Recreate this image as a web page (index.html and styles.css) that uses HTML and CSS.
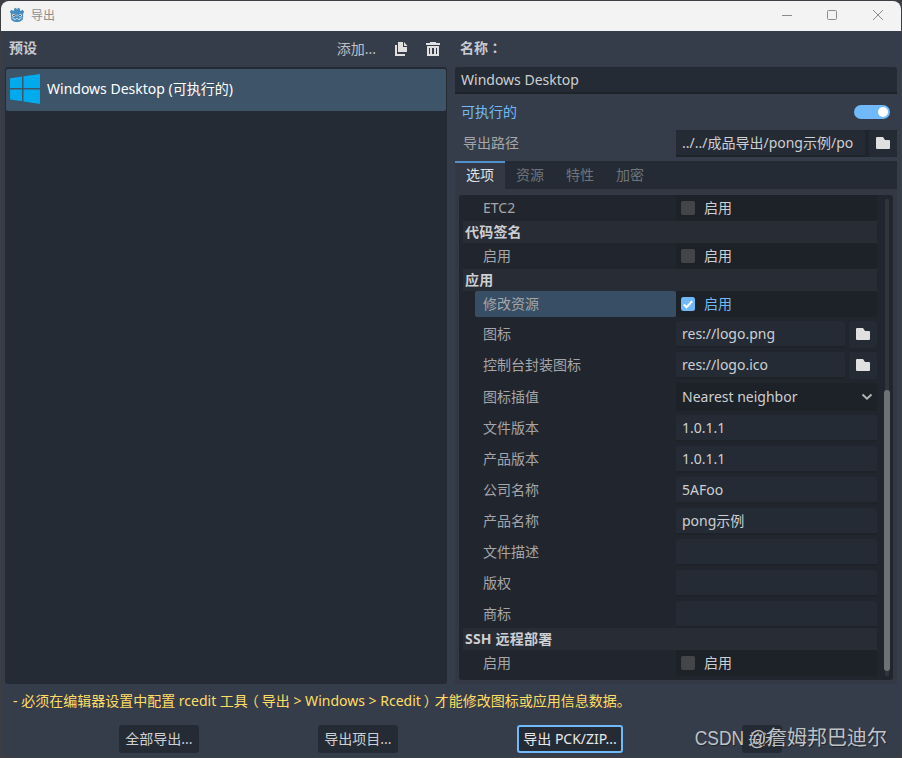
FILE: index.html
```html
<!DOCTYPE html>
<html lang="zh-CN">
<head>
<meta charset="utf-8">
<title>导出</title>
<link rel="stylesheet" href="styles.css">
</head>
<body>
<svg class="defs" width="0" height="0">
  <symbol id="folder" viewBox="0 0 14 12"><path d="M1 0h6l2 3h4q1 0 1 1v7q0 1-1 1H1q-1 0-1-1V1q0-1 1-1z" fill="#e0e0e0"/></symbol>
</svg>
<div class="window">
  <header class="titlebar">
    <svg class="logo" width="16" height="16" viewBox="0 0 16 16">
      <path d="M.8 5l1.500-2.200 1.700 1 1-.4.2-2 2-.6.4 1.500h.8l.4-1.500 2 .6.2 2 1 .4 1.700-1L15.200 5l-1.100 1.500V11c0 2.500-3 4-6.100 4s-6.100-1.500-6.100-4V6.500z" fill="#478cbf"/>
      <circle cx="4.800" cy="8.200" r="1.500" fill="#fff"/><circle cx="11.200" cy="8.200" r="1.500" fill="#fff"/>
      <circle cx="5" cy="8.300" r=".9" fill="#414042"/><circle cx="11" cy="8.300" r=".9" fill="#414042"/>
      <path d="M8 7.500v2M2.400 10.800l2.400.3.2 1.300h2l.3-1h1.400l.3 1h2l.2-1.300 2.400-.3" fill="none" stroke="#fff" stroke-width=".6"/>
    </svg>
    <span class="caption">导出</span>
    <svg class="controls" width="102" height="12" viewBox="0 0 102 12" fill="none" stroke="#8b8b8b">
      <path d="M0 6.500h10"/><rect x="45.500" y="1.500" width="9" height="9" rx="1"/><path d="M91 1l10 10M101 1L91 11"/>
    </svg>
  </header>

  <main class="columns">
    <section class="presets">
      <div class="toolbar">
        <b class="heading">预设</b>
        <span class="add">添加...</span>
        <svg width="14" height="14" viewBox="0 0 14 14" fill="#e0e0e0"><path d="M0 3h2v9h8v2H0zM3 0h5v5h4v5H3zM9 0l3.500 4H9z"/></svg>
        <svg class="trash" width="14" height="14" viewBox="0 0 14 14" fill="#e0e0e0"><path d="M4 0h6v1h4v2H0V1h4z"/><path fill-rule="evenodd" d="M1 4h12v10H1zM3 6v6h1V6zM6 6v6h2V6zM10 6v6h1V6z"/></svg>
      </div>
      <div class="preset-list">
        <div class="preset">
          <svg width="30" height="30" viewBox="0 0 30 30" fill="#00abed"><path d="M0 4.200L12 2.500V14H0zM13.500 2.300L30 0v14H13.500zM0 15.500h12V27.300L0 25.600zM13.500 15.500H30V30l-16.500-2.400z"/></svg>
          <span>Windows Desktop (可执行的)</span>
        </div>
      </div>
    </section>

    <section class="details">
      <b class="heading name-label">名称<span class="punct" lang="zh-TW">：</span></b>
      <div class="field name-field">Windows Desktop</div>
      <div class="runnable"><span>可执行的</span><i class="switch"></i></div>
      <div class="path-row">
        <span class="label">导出路径</span>
        <div class="value path"><div class="field">../../成品导出/pong示例/po</div><div class="browse"><svg width="14" height="12"><use href="#folder"/></svg></div></div>
      </div>
      <nav class="tabs"><span class="tab active">选项</span><span class="tab">资源</span><span class="tab">特性</span><span class="tab">加密</span></nav>
      <div class="panel">
        <div class="inspector">
          <div class="props">
            <div class="row check"><span class="label">ETC2</span><div class="toggle"><i class="box"></i>启用</div></div>
            <b class="group">代码签名</b>
            <div class="row check"><span class="label">启用</span><div class="toggle"><i class="box"></i>启用</div></div>
            <b class="group">应用</b>
            <div class="row check selected"><span class="label">修改资源</span><div class="toggle on"><svg width="14" height="14" viewBox="0 0 14 14"><rect width="14" height="14" rx="2.500" fill="#70bafa"/><path d="M2.800 7.500l2.700 2.700 5.600-6" fill="none" stroke="#fff" stroke-width="2"/></svg>启用</div></div>
            <div class="row"><span class="label">图标</span><div class="value"><div class="field">res://logo.png</div><div class="browse"><svg width="14" height="12"><use href="#folder"/></svg></div></div></div>
            <div class="row"><span class="label">控制台封装图标</span><div class="value"><div class="field">res://logo.ico</div><div class="browse"><svg width="14" height="12"><use href="#folder"/></svg></div></div></div>
            <div class="row"><span class="label tall">图标插值</span><div class="select">Nearest neighbor<svg width="12" height="8" viewBox="0 0 12 8"><path d="M1.500 1.500L6 5.700l4.500-4.200" fill="none" stroke="#b4b5b7" stroke-width="2"/></svg></div></div>
            <div class="row"><span class="label">文件版本</span><div class="field">1.0.1.1</div></div>
            <div class="row"><span class="label">产品版本</span><div class="field">1.0.1.1</div></div>
            <div class="row"><span class="label">公司名称</span><div class="field">5AFoo</div></div>
            <div class="row"><span class="label">产品名称</span><div class="field">pong示例</div></div>
            <div class="row"><span class="label">文件描述</span><div class="field"></div></div>
            <div class="row"><span class="label">版权</span><div class="field"></div></div>
            <div class="row"><span class="label">商标</span><div class="field"></div></div>
            <b class="group">SSH 远程部署</b>
            <div class="row check"><span class="label">启用</span><div class="toggle"><i class="box"></i>启用</div></div>
          </div>
          <div class="scrollbar"><div class="thumb"></div></div>
        </div>
      </div>
    </section>
  </main>

  <p class="warning">- 必须在编辑器设置中配置 rcedit 工具<span class="paren open">（</span>导出 &gt; Windows &gt; Rcedit<span class="paren close">）</span>才能修改图标或应用信息数据。</p>
  <footer class="actions">
    <span class="button">全部导出...</span>
    <span class="button">导出项目...</span>
    <span class="button primary">导出 PCK/ZIP...</span>
    <span class="button short">关闭</span>
  </footer>
  <div class="watermark"><span class="site">CSDN @</span>詹姆邦巴迪尔</div>
</div>
</body>
</html>
```
FILE: styles.css
```css
* { box-sizing: border-box; }
body {
  margin: 0;
  height: 758px;
  padding: 1px;
  overflow: hidden;
  background: #3d3e44;
  color: #cdcfd2;
  font: 14px/20px "Noto Sans", "Noto Sans CJK SC", sans-serif;
}
svg { display: block; flex: none; }
.defs { position: absolute; }
.punct { font-family: "Noto Sans CJK TC", sans-serif; line-height: 1; }
.paren { display: inline-block; width: 14px; }
.open { transform: translateX(-3px); }
.close { transform: translateX(3px); }
.window {
  position: relative;
  height: 756px;
  border-radius: 8px;
  overflow: hidden;
  background: #363d4a;
}
.titlebar {
  display: flex;
  align-items: center;
  height: 30px;
  padding: 0 17px 2px 8px;
  background: #f3f3f3;
  color: #8e8e8e;
  font-size: 12px;
}
.caption { margin-left: 6px; padding-top: 2px; }
.controls { margin-left: auto; }
.columns {
  display: grid;
  grid-template-columns: 442px 442px;
  column-gap: 8px;
  height: 653px;
  padding-left: 4px;
}
.presets { display: flex; flex-direction: column; }
.toolbar { display: flex; align-items: center; height: 36px; padding: 0 7px 0 4px; }
.heading { padding-bottom: 2px; font-weight: 700; line-height: 20px; color: #c9cbd0; }
.add { margin: 0 19px 0 auto; color: #bec0c5; }
.trash { margin-left: 17px; }
.preset-list { flex: 1; padding: 2px 1px; background: #252b34; border-radius: 3px; }
.preset {
  display: flex;
  align-items: center;
  gap: 7px;
  height: 42px;
  padding: 0 4px 2px;
  background: #3e5469;
  border-radius: 2px;
  color: #fff;
}
.details { display: flex; flex-direction: column; }
.name-label { height: 36px; padding: 7px 0 0 5px; }
.field {
  flex: 1;
  min-width: 0;
  height: 27px;
  padding: 3px 6px 0;
  background: #252b34;
  border-bottom: 2px solid #1e2229;
  border-radius: 3px 3px 0 0;
  white-space: nowrap;
  overflow: hidden;
}
.name-field { flex: none; }
.runnable {
  display: flex;
  justify-content: space-between;
  align-items: center;
  height: 36px;
  padding: 0 7px 0 6px;
  color: #70bafa;
}
.switch { width: 36px; height: 14px; padding: 2px; border-radius: 7px; background: #70bafa; }
.switch::after { content: ""; display: block; width: 10px; height: 10px; margin-left: auto; border-radius: 50%; background: #fff; }
.path-row { display: flex; align-items: center; height: 27px; }
.label { flex: none; color: #a5a6a9; }
.path-row .label { width: 221px; padding: 0 0 2px 8px; }
.value { display: flex; flex: 1; min-width: 0; gap: 4px; }
.path { gap: 4px; background: #20252d; }
.browse {
  display: grid;
  place-items: center;
  width: 28px;
  height: 27px;
  padding-bottom: 1px;
  background: #252b34;
  border-radius: 3px;
}
.tabs { display: flex; height: 28px; margin-top: 4px; background: #252b34; }
.tab { width: 50px; padding-top: 4px; text-align: center; color: #707479; }
.tab.active { padding-top: 2px; border-top: 2px solid #5291cb; background: #333844; color: #e0e1e3; }
.panel { flex: 1; padding: 6px 4px 4px; background: #333844; border-radius: 0 0 3px 3px; }
.inspector { display: flex; height: 485px; background: #21252d; border-radius: 3px; }
.props { width: 414px; margin-left: 4px; }
.row { display: flex; align-items: flex-start; padding-top: 4px; }
.row .label { width: 201px; margin-left: 12px; padding-left: 8px; line-height: 26px; }
.row .tall { line-height: 28px; }
.row.check { padding-top: 0; height: 26px; }
.selected .label { background: #374e65; border-radius: 2px; }
.toggle {
  display: flex;
  flex: 1;
  align-items: center;
  gap: 9px;
  height: 26px;
  padding-left: 5px;
  background: #1d2128;
  border-radius: 3px;
}
.on { color: #70bafa; }
.box { width: 14px; height: 14px; border-radius: 2px; background: #434548; }
.group { display: block; height: 22px; padding-left: 2px; line-height: 21px; letter-spacing: .2px; background: #282c35; }
.select {
  display: flex;
  flex: 1;
  align-items: center;
  justify-content: space-between;
  height: 28px;
  padding: 0 4px 0 6px;
  background: #1d2128;
  border-radius: 3px;
}
.scrollbar { width: 6px; height: 477px; margin: 4px 0 0 7px; padding-top: 191px; border-radius: 3px; background: linear-gradient(90deg, transparent 1px, #30343b 1px, #30343b 5px, transparent 5px); }
.thumb { height: 281px; border-radius: 3px; background: #6e7175; }
.warning { margin: 7px 0 0 12px; white-space: nowrap; color: #ffdd65; }
.actions { display: flex; gap: 119px; margin-top: 14px; padding-left: 118px; }
.button {
  flex: none;
  width: 80px;
  height: 28px;
  padding: 4px 0;
  border-radius: 3px;
  background: #252b34;
  text-align: center;
  white-space: nowrap;
}
.button.primary { width: 106px; padding: 2px 0; border: 2px solid #70bafa; color: #e7e8ea; }
.button.short { width: 40px; }
.watermark {
  position: absolute;
  right: 14px;
  bottom: 4px;
  display: flex;
  color: #bfc2c6;
  font: 20px/30px "Liberation Sans", "Noto Sans CJK SC", sans-serif;
  text-shadow: 1px 1px 1px #20252d;
}
.site { transform: scaleX(.87); transform-origin: right; }
```
